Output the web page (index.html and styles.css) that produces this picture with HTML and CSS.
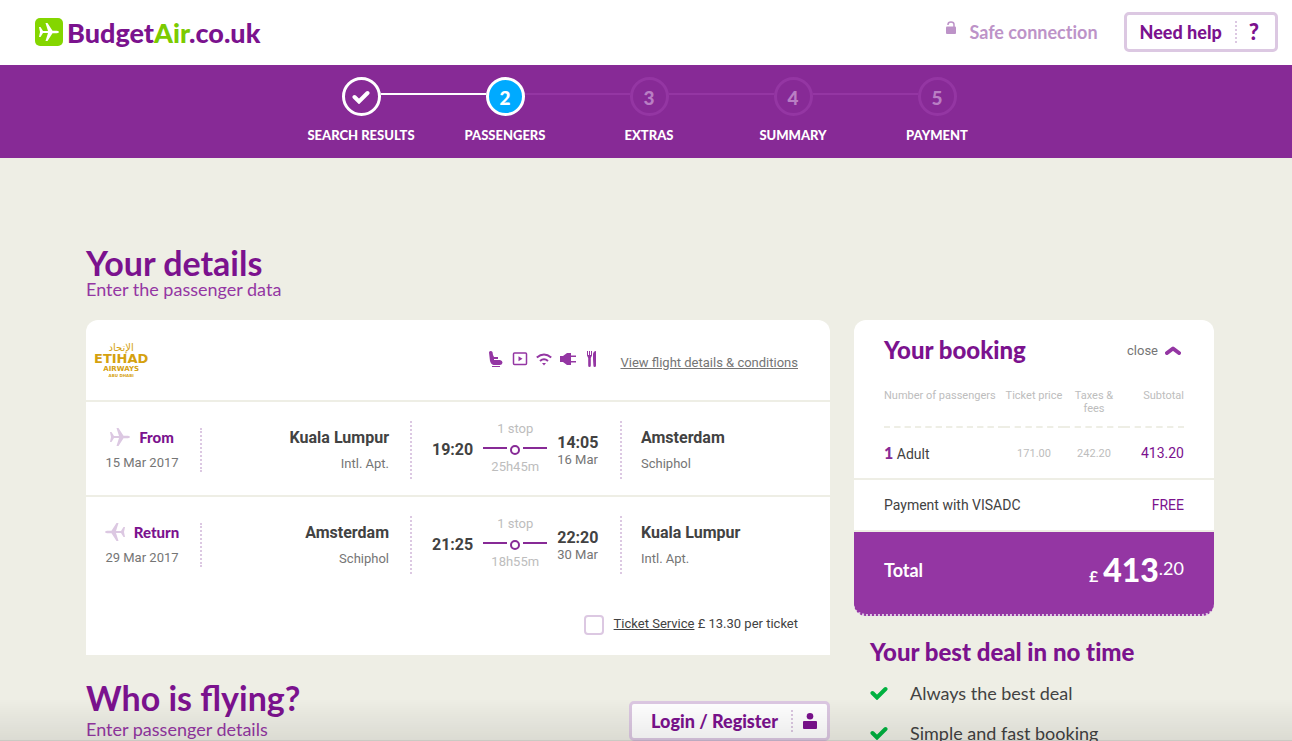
FILE: index.html
```html
<!DOCTYPE html>
<html lang="en">
<head>
    <meta charset="UTF-8">
    <meta name="viewport" content="width=device-width, initial-scale=1.0">
    <title>BudgetAir.co.uk - Passengers</title>
    <link rel="stylesheet" href="styles.css">
</head>
<body>
    <!-- shared icons -->
    <svg class="sprite" aria-hidden="true">
        <symbol id="plane" viewBox="0 0 20 18">
            <path d="M0 4h1.500l2.500 4h5L6.500 0h2l5 7.800h4.500q2 .4 2 1.200t-2 1.200h-4.500l-5 7.800h-2L9 10H4l-2.500 4H0l1-5z"/>
        </symbol>
        <symbol id="check" viewBox="0 0 18 14">
            <path d="M2.500 7l4.500 4.500L15.500 3" fill="none" stroke="currentColor" stroke-width="4" stroke-linecap="round"/>
        </symbol>
    </svg>

    <header class="header">
        <a href="#" class="logo">
            <span class="logo-icon"><svg width="20" height="18"><use href="#plane"/></svg></span>
            <span class="logo-text">Budget<span class="green">Air</span>.co.uk</span>
        </a>
        <div class="header-right">
            <span class="safe">
                <svg width="10" height="13" viewBox="0 0 10 13"><path d="M2 4V3.500Q2 1 5 1t3 2.500V6" fill="none" stroke="currentColor" stroke-width="1.500"/><rect y="5.500" width="10" height="7.500" rx="1" fill="currentColor"/></svg>
                Safe connection
            </span>
            <button type="button" class="btn">Need help <span class="btn-icon">?</span></button>
        </div>
    </header>

    <nav class="steps-bar">
        <ol class="steps">
            <li class="step done">
                <div class="track"><span class="circle"><svg width="18" height="14"><use href="#check"/></svg></span></div>
                SEARCH RESULTS
            </li>
            <li class="step active">
                <div class="track"><span class="circle">2</span></div>
                PASSENGERS
            </li>
            <li class="step">
                <div class="track"><span class="circle">3</span></div>
                EXTRAS
            </li>
            <li class="step">
                <div class="track"><span class="circle">4</span></div>
                SUMMARY
            </li>
            <li class="step">
                <div class="track"><span class="circle">5</span></div>
                PAYMENT
            </li>
        </ol>
    </nav>

    <div class="page">
        <h1>Your details</h1>
        <p class="subtitle">Enter the passenger data</p>

        <div class="columns">
            <main class="main">
                <section class="flights">
                    <div class="flights-head">
                        <div class="airline">
                            <span class="airline-ar" lang="ar">الإتحاد</span>
                            <span class="airline-name">ETIHAD</span>
                            <span class="airline-sub">AIRWAYS</span>
                            <span class="airline-city">ABU DHABI</span>
                        </div>
                        <div class="facilities">
                            <svg width="16" height="16" viewBox="0 0 16 16"><path d="M1 1.500Q1 0 2.500 0T4.500 1L5 4l1 2h4v2H6v1h6q2.500.500 2.500 2.500T12 14H5.500Q3 13.500 2 10zM4 15h8v1H4z"/></svg>
                            <svg width="16" height="16" viewBox="0 0 16 16"><rect x="1.500" y="2" width="13" height="11.500" rx="1" fill="none" stroke="currentColor" stroke-width="1.500"/><path d="M6.500 5.300L10.500 7.800 6.500 10.300z"/></svg>
                            <svg width="16" height="16" viewBox="0 0 16 16"><path d="M.8 6.500Q8 .500 15.200 6.500M4 10Q8 6.500 12 10" fill="none" stroke="currentColor" stroke-width="2"/><path d="M6 12h4l-2 2.500z"/></svg>
                            <svg width="16" height="16" viewBox="0 0 16 16"><path d="M0 5h3l4-3h4v2.500h5V6h-5v4h5v1.500h-5V14H7l-4-3H0z"/></svg>
                            <svg width="16" height="16" viewBox="0 0 16 16"><path d="M3 0h1v4h1V0h1v4h1V0h1v4.500L6.800 7v7.500q0 1.500-1.300 1.500T4.200 14.500V7L3 4.500zM9 8V3q.5-3 3-3v14.500q0 1.500-1.300 1.500T9.400 14.500z"/></svg>
                        </div>
                        <a href="#" class="details-link">View flight details &amp; conditions</a>
                    </div>

                    <div class="flight">
                        <div class="date">
                            <div class="direction"><svg width="20" height="18"><use href="#plane"/></svg>From</div>
                            <p>15 Mar 2017</p>
                        </div>
                        <div class="place origin">
                            <strong>Kuala Lumpur</strong>
                            <p>Intl. Apt.</p>
                        </div>
                        <div class="times">
                            <strong>19:20</strong>
                            <div class="stops">
                                <span>1 stop</span>
                                <div class="line"><i></i></div>
                                <span>25h45m</span>
                            </div>
                            <div class="arrival"><strong>14:05</strong><p>16 Mar</p></div>
                        </div>
                        <div class="place">
                            <strong>Amsterdam</strong>
                            <p>Schiphol</p>
                        </div>
                    </div>

                    <div class="flight">
                        <div class="date">
                            <div class="direction"><svg class="back" width="20" height="18"><use href="#plane"/></svg>Return</div>
                            <p>29 Mar 2017</p>
                        </div>
                        <div class="place origin">
                            <strong>Amsterdam</strong>
                            <p>Schiphol</p>
                        </div>
                        <div class="times">
                            <strong>21:25</strong>
                            <div class="stops">
                                <span>1 stop</span>
                                <div class="line"><i></i></div>
                                <span>18h55m</span>
                            </div>
                            <div class="arrival"><strong>22:20</strong><p>30 Mar</p></div>
                        </div>
                        <div class="place">
                            <strong>Kuala Lumpur</strong>
                            <p>Intl. Apt.</p>
                        </div>
                    </div>

                    <div class="ticket-service">
                        <input type="checkbox" id="ticket-service">
                        <label for="ticket-service"><u>Ticket Service</u> £ 13.30 per ticket</label>
                    </div>
                </section>

                <section class="who">
                    <div>
                        <h1>Who is flying?</h1>
                        <p class="subtitle">Enter passenger details</p>
                    </div>
                    <button type="button" class="btn login">Login / Register
                        <span class="btn-icon"><svg width="14" height="16" viewBox="0 0 14 16"><circle cx="7" cy="3.300" r="3.300"/><rect y="8" width="14" height="8" rx="1"/></svg></span>
                    </button>
                </section>
            </main>

            <aside class="sidebar">
                <section class="booking">
                    <div class="booking-head">
                        <h2>Your booking</h2>
                        <button type="button" class="close">close
                            <svg width="16" height="10" viewBox="0 0 16 10"><path d="M2 8l6-4.500L14 8" fill="none" stroke="currentColor" stroke-width="4" stroke-linecap="round" stroke-linejoin="round"/></svg>
                        </button>
                    </div>
                    <table class="prices">
                        <thead>
                            <tr>
                                <th>Number of passengers</th>
                                <th>Ticket price</th>
                                <th>Taxes &amp; fees</th>
                                <th>Subtotal</th>
                            </tr>
                        </thead>
                        <tbody>
                            <tr>
                                <td><b>1</b> Adult</td>
                                <td>171.00</td>
                                <td>242.20</td>
                                <td>413.20</td>
                            </tr>
                        </tbody>
                    </table>
                    <div class="payment">
                        <span>Payment with VISADC</span>
                        <span class="free">FREE</span>
                    </div>
                    <div class="total">
                        <span>Total</span>
                        <span class="amount"><small>£</small><strong>413</strong><span class="cents">.20</span></span>
                    </div>
                </section>

                <section class="deal">
                    <h2>Your best deal in no time</h2>
                    <ul>
                        <li><svg width="18" height="14"><use href="#check"/></svg>Always the best deal</li>
                        <li><svg width="18" height="14"><use href="#check"/></svg>Simple and fast booking</li>
                    </ul>
                </section>
            </aside>
        </div>
    </div>

    <div class="bottom-shade"></div>
</body>
</html>
```

FILE: styles.css
```css
* {
    box-sizing: border-box;
}
body {
    margin: 0;
    background-color: #eeeee5;
    color: #424242;
    font-family: Roboto, Arial, sans-serif;
    font-size: 13px;
    line-height: 18px;
    overflow-x: hidden;
}
h1, h2, p, ul, ol {
    margin: 0;
    padding: 0;
}
ul, ol {
    list-style: none;
}
svg {
    fill: currentColor;
    flex: none;
}
button {
    font-family: inherit;
    cursor: pointer;
}
.sprite {
    display: none;
}

/* header */
.header {
    display: flex;
    justify-content: space-between;
    align-items: center;
    height: 65px;
    padding: 0 14px 2px 35px;
    background-color: #fff;
    font-family: Lato, sans-serif;
}
.logo {
    display: flex;
    align-items: center;
    gap: 4px;
    color: #7b128e;
    text-decoration: none;
}
.logo-icon {
    display: flex;
    align-items: center;
    justify-content: center;
    width: 28px;
    height: 28px;
    border-radius: 5px;
    background-color: #84d600;
    color: #fff;
}
.logo-text {
    padding-top: 2px;
    font-size: 27px;
    font-weight: 900;
    line-height: 32px;
}
.green {
    color: #7bcb00;
}
.header-right {
    display: flex;
    align-items: center;
    gap: 26px;
}
.safe {
    display: flex;
    align-items: center;
    gap: 13px;
    color: #bd93c8;
    font-size: 18px;
    font-weight: bold;
    font-variant-ligatures: none;
}
.safe svg {
    margin-bottom: 8px;
}
.btn {
    display: flex;
    align-items: center;
    height: 40px;
    padding: 0 16px 0 13px;
    border: 3px solid #dcc8e2;
    border-radius: 5px;
    background-color: #fff;
    color: #7b128e;
    font-family: Lato, sans-serif;
    font-size: 18px;
    font-weight: 900;
    white-space: nowrap;
}
.btn-icon {
    display: flex;
    align-items: center;
    height: 22px;
    margin-left: 13px;
    padding-left: 12px;
    border-left: 2px dotted #dcc8e2;
    font-size: 22px;
}

/* steps */
.steps-bar {
    height: 93px;
    padding: 12px 0 0 6px;
    background-color: #872a96;
    color: #fff;
    font-family: Lato, sans-serif;
}
.steps {
    display: flex;
    justify-content: center;
}
.step {
    width: 144px;
    font-size: 13px;
    font-weight: 900;
    text-align: center;
}
.track {
    display: flex;
    margin-bottom: 10px;
}
.track::before,
.track::after {
    content: "";
    flex: 1;
    height: 2px;
    margin-top: 16px;
    background-color: #9436a3;
}
.step:first-child .track::before,
.step:last-child .track::after {
    background: none;
}
.done .track::after,
.active .track::before {
    background-color: #fff;
}
.circle {
    display: flex;
    align-items: center;
    justify-content: center;
    width: 39px;
    height: 39px;
    padding-top: 2px;
    border: 3px solid #9436a3;
    border-radius: 50%;
    color: #b97fc4;
    font-size: 19px;
}
.done .circle {
    padding: 0;
    border-color: #fff;
    color: #fff;
}
.active .circle {
    border-color: #fff;
    background-color: #00aaff;
    color: #fff;
}

/* page */
.page {
    max-width: 1292px;
    margin: 0 auto;
    padding: 88px 78px 0 86px;
}
h1 {
    color: #7b128e;
    font-family: Lato, sans-serif;
    font-size: 34px;
    font-weight: bold;
    line-height: 34px;
}
.subtitle {
    color: #9436a3;
    font-family: Lato, sans-serif;
    font-size: 18px;
    line-height: 18px;
}
.columns {
    display: flex;
    align-items: flex-start;
    gap: 24px;
    margin-top: 22px;
}
.main {
    flex: 1;
}
.sidebar {
    width: 360px;
}

/* flights */
.flights {
    border-radius: 12px 12px 0 0;
    background-color: #fff;
}
.flights-head {
    display: flex;
    align-items: center;
    height: 80px;
    padding: 0 32px 0 8px;
}
.airline {
    display: flex;
    flex-direction: column;
    align-items: center;
    margin-right: auto;
    color: #d5a10f;
    font-family: "DejaVu Sans", sans-serif;
    font-weight: bold;
}
.airline-ar {
    font-size: 10px;
    font-weight: normal;
    line-height: 10px;
}
.airline-name {
    font-size: 13px;
    line-height: 12px;
}
.airline-sub {
    font-size: 7px;
    line-height: 8px;
}
.airline-city {
    font-size: 4px;
    line-height: 5px;
}
.facilities {
    display: flex;
    gap: 8px;
    margin: 0 20px 2px 0;
    color: #9436a3;
}
.details-link {
    margin-top: 5px;
    color: #757575;
}
.flight {
    display: grid;
    grid-template-columns: 116px 1fr 210px 208px;
    align-items: center;
    padding: 19px 0 16px;
    border-top: 2px solid #eeeee5;
}
.date {
    padding-right: 2px;
    border-right: 2px dotted #dcc8e2;
    color: #757575;
    text-align: center;
}
.direction {
    display: flex;
    align-items: center;
    justify-content: center;
    gap: 9px;
    height: 18px;
    margin-bottom: 8px;
    color: #7b128e;
    font-family: Lato, sans-serif;
    font-size: 15px;
    font-weight: 900;
}
.direction svg {
    color: #dcc8e2;
}
.direction .back {
    transform: scaleX(-1);
}
.flight strong {
    font-size: 16px;
}
.flight p {
    color: #757575;
}
.place {
    height: 58px;
    padding: 8px 19px;
}
.place p {
    margin-top: 7px;
}
.origin {
    padding-right: 21px;
    border-right: 2px dotted #dcc8e2;
    text-align: right;
}
.times {
    display: flex;
    align-items: center;
    gap: 10px;
    height: 58px;
    padding-left: 20px;
    border-right: 2px dotted #dcc8e2;
}
.stops {
    display: flex;
    flex-direction: column;
    align-items: center;
    width: 64px;
    margin-bottom: 4px;
    color: #bdbdbd;
}
.line {
    display: flex;
    align-items: center;
    align-self: stretch;
    gap: 3px;
    height: 20px;
}
.line::before,
.line::after {
    content: "";
    flex: 1;
    height: 2px;
    background-color: #872a96;
}
.line i {
    width: 10px;
    height: 10px;
    margin-top: 4px;
    border: 2px solid #872a96;
    border-radius: 50%;
}
.arrival {
    padding-top: 4px;
}
.arrival strong {
    display: block;
    line-height: 16px;
}
.ticket-service {
    display: flex;
    justify-content: flex-end;
    gap: 10px;
    padding: 25px 32px 20px 0;
}
.ticket-service input {
    appearance: none;
    width: 20px;
    height: 20px;
    margin: 0;
    border: 2px solid #dcc8e2;
    border-radius: 4px;
    background-color: #fff;
}
.who {
    display: flex;
    justify-content: space-between;
    align-items: flex-start;
    padding-top: 26px;
}
.who .subtitle {
    margin-top: 5px;
}
.login {
    margin-top: 20px;
    padding: 0 10px 0 19px;
}
.login .btn-icon {
    padding-left: 10px;
}

/* booking */
.booking {
    border-radius: 12px;
    background-color: #fff;
}
h2 {
    color: #7b128e;
    font-family: Lato, sans-serif;
    font-size: 24px;
    font-weight: 900;
    font-variant-ligatures: none;
    line-height: 28px;
}
.booking-head {
    display: flex;
    justify-content: space-between;
    align-items: center;
    padding: 16px 33px 0 30px;
}
.close {
    display: flex;
    align-items: center;
    gap: 7px;
    padding: 0;
    border: 0;
    background: none;
    color: #757575;
    font-size: 13px;
}
.close svg {
    color: #9436a3;
}
.prices {
    width: 300px;
    margin: 23px 30px 0;
    border-collapse: collapse;
    table-layout: fixed;
    color: #bdbdbd;
    font-size: 11px;
    line-height: 13px;
    text-align: center;
}
.prices th {
    padding: 2px 0 11px;
    border-bottom: 2px dashed #eeeee5;
    font-weight: normal;
    vertical-align: top;
    white-space: nowrap;
}
.prices td {
    height: 51px;
    padding: 0;
}
.prices th:nth-child(1) {
    width: 120px;
}
.prices th:nth-child(3) {
    padding: 2px 8px 11px;
    white-space: normal;
}
.prices th:first-child,
.prices td:first-child {
    text-align: left;
}
.prices th:last-child,
.prices td:last-child {
    text-align: right;
}
.prices td:first-child {
    color: #424242;
    font-size: 14px;
}
.prices td:last-child {
    color: #7b128e;
    font-size: 14px;
}
.prices b {
    color: #872a96;
    font-family: Lato, sans-serif;
    font-size: 16px;
    font-weight: 900;
}
.payment {
    display: flex;
    justify-content: space-between;
    padding: 16px 30px;
    border-top: 2px solid #eeeee5;
    border-bottom: 2px solid #eeeee5;
    font-size: 14px;
}
.free {
    color: #7b128e;
}
.total {
    display: flex;
    justify-content: space-between;
    align-items: center;
    height: 84px;
    padding: 0 30px 6px;
    border-bottom: 2px dotted #dcc8e2;
    border-radius: 0 0 12px 12px;
    background-color: #9436a3;
    color: #fff;
    font-family: Lato, sans-serif;
    font-size: 18px;
    font-weight: bold;
}
.amount {
    display: flex;
    align-items: baseline;
}
.amount small {
    margin-right: 5px;
    font-size: 16px;
}
.amount strong {
    font-size: 32px;
    font-weight: 900;
    line-height: 36px;
}
.cents {
    align-self: flex-start;
    font-weight: normal;
    line-height: 32px;
}
.deal {
    padding: 22px 16px 0;
}
.deal li {
    display: flex;
    align-items: center;
    gap: 22px;
    height: 40px;
    font-family: Lato, sans-serif;
    font-size: 18px;
}
.deal ul {
    padding-top: 7px;
}
.deal svg {
    color: #00b140;
}

/* shade along the bottom edge of the window */
.bottom-shade {
    position: fixed;
    right: 0;
    bottom: 0;
    left: 0;
    height: 42px;
    border-bottom: 1px solid rgba(0, 0, 0, 0.15);
    background: linear-gradient(rgba(0, 0, 0, 0), rgba(0, 0, 0, 0.08));
    pointer-events: none;
}
```
